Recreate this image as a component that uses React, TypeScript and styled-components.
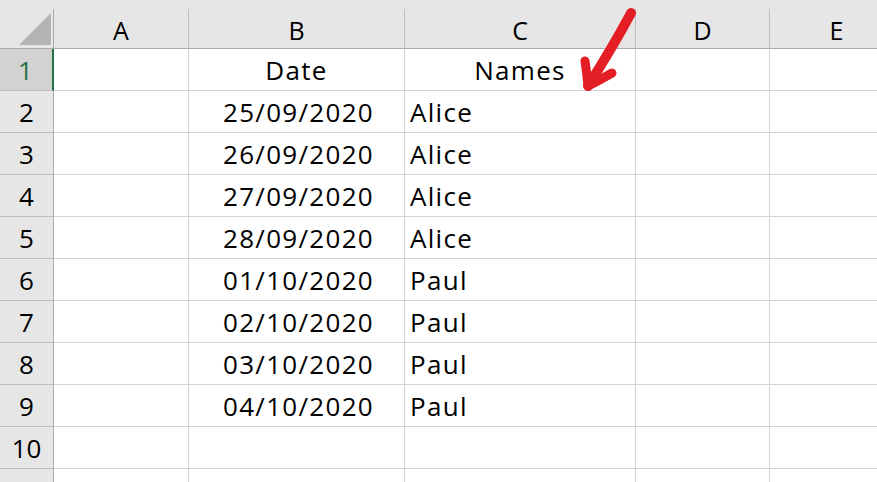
import React from "react";
import styled, { createGlobalStyle } from "styled-components";

const Global = createGlobalStyle`
  html, body { margin: 0; padding: 0; background: #ffffff; overflow: hidden; }
  body { font-family: "Open Sans", "Noto Sans", sans-serif; }
`;

const Sheet = styled.div`
  position: relative;
  width: 877px;
  height: 482px;
  overflow: hidden;
  background: #ffffff;
`;

const TopStrip = styled.div`
  height: 9px;
  width: 904px;
  background: #e6e6e6;
`;

const Grid = styled.div`
  display: grid;
  width: 904px;
  grid-template-columns: 54px 135px 216px 231px 134px 134px;
  grid-auto-rows: 42px;
  grid-template-rows: 40px;
`;

const Corner = styled.div`
  position: relative;
  background: #e6e6e6;
  border-right: 1px solid #ababab;
  border-bottom: 1px solid #ababab;
  box-sizing: border-box;
`;

const CornerTriangle = styled.svg`
  position: absolute;
  left: 19px;
  top: 4px;
`;

const ColHeader = styled.div`
  background: #e6e6e6;
  box-sizing: border-box;
  border-right: 1px solid #bfbfbf;
  border-bottom: 1px solid #ababab;
  display: flex;
  align-items: center;
  justify-content: center;
  font-size: 25px;
  color: #000000;
  padding-top: 3px;
`;

const RowHeader = styled.div<{ $active?: boolean }>`
  box-sizing: border-box;
  background: ${(p) => (p.$active ? "#d2d2d2" : "#e6e6e6")};
  color: ${(p) => (p.$active ? "#217346" : "#000000")};
  border-right: ${(p) => (p.$active ? "2px solid #217346" : "1px solid #ababab")};
  border-bottom: 1px solid #bdbdbd;
  display: flex;
  align-items: center;
  justify-content: center;
  font-size: 26px;
  padding-right: ${(p) => (p.$active ? "1px" : "0")};
`;

const Cell = styled.div<{ $align?: "left" | "right" | "center" }>`
  box-sizing: border-box;
  border-right: 1px solid #d4d4d4;
  border-bottom: 1px solid #d4d4d4;
  display: flex;
  align-items: center;
  justify-content: ${(p) =>
    p.$align === "right" ? "flex-end" : p.$align === "center" ? "center" : "flex-start"};
  padding: ${(p) => (p.$align === "right" ? "0 30px 0 0" : p.$align === "center" ? "0" : "0 0 0 5px")};
  font-size: 26px;
  color: #000000;
  white-space: nowrap;
  letter-spacing: 1.3px;
`;

const Arrow = styled.svg`
  position: absolute;
  left: 570px;
  top: 0;
  pointer-events: none;
`;

const cols = ["A", "B", "C", "D", "E"];

const rows: Array<[string, string]> = [
  ["Date", "Names"],
  ["25/09/2020", "Alice"],
  ["26/09/2020", "Alice"],
  ["27/09/2020", "Alice"],
  ["28/09/2020", "Alice"],
  ["01/10/2020", "Paul"],
  ["02/10/2020", "Paul"],
  ["03/10/2020", "Paul"],
  ["04/10/2020", "Paul"],
  ["", ""],
  ["", ""],
];

export default function App() {
  return (
    <Sheet>
      <Global />
      <TopStrip />
      <Grid>
        <Corner>
          <CornerTriangle width="33" height="33" viewBox="0 0 33 33">
            <polygon points="0,32 32,32 32,0" fill="#b4b4b4" />
          </CornerTriangle>
        </Corner>
        {cols.map((c) => (
          <ColHeader key={c}>{c}</ColHeader>
        ))}
        {rows.map(([b, c], i) => (
          <React.Fragment key={i}>
            <RowHeader $active={i === 0}>{i + 1}</RowHeader>
            <Cell />
            <Cell $align={i === 0 ? "center" : "right"}>{b}</Cell>
            <Cell $align={i === 0 ? "center" : "left"}>{c}</Cell>
            <Cell />
            <Cell />
          </React.Fragment>
        ))}
      </Grid>
      <Arrow width="80" height="100" viewBox="0 0 80 100">
        <g
          fill="none"
          stroke="#e31e24"
          strokeLinecap="round"
          strokeLinejoin="round"
        >
          <path d="M61 13 Q44 45 18 86" strokeWidth="10" />
          <path d="M15 61 Q17 75 18 86 Q30 80 42 73" strokeWidth="9" />
        </g>
      </Arrow>
    </Sheet>
  );
}
